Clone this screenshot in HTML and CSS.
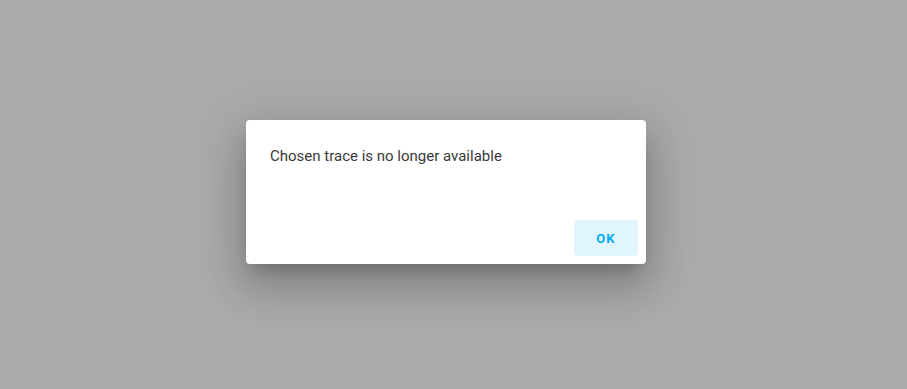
FILE: index.html
```html
<!DOCTYPE html>
<html lang="en">
<head>
    <meta charset="UTF-8">
    <title>Trace unavailable</title>
    <link rel="stylesheet" href="styles.css">
</head>
<body>
    <div class="backdrop">
        <div class="dialog" role="dialog">
            <div class="dialog-content">
                <p class="dialog-text">Chosen trace is no longer available</p>
            </div>
            <div class="dialog-actions">
                <button class="btn-ok">OK</button>
            </div>
        </div>
    </div>
</body>
</html>
```

FILE: styles.css
```css
* {
    margin: 0;
    padding: 0;
    box-sizing: border-box;
}

body {
    font-family: Roboto, "Liberation Sans", sans-serif;
    background: #aaaaaa;
    width: 907px;
    height: 389px;
    overflow: hidden;
}

.backdrop {
    display: flex;
    align-items: center;
    justify-content: center;
    height: 100%;
    padding: 0 15px 5px 0;
}

.dialog {
    width: 400px;
    background: #fff;
    border-radius: 4px;
    box-shadow: 0 11px 15px -7px rgba(0,0,0,0.2),
                0 24px 38px 3px rgba(0,0,0,0.14),
                0 9px 46px 8px rgba(0,0,0,0.12);
}

.dialog-content {
    padding: 26px 24px 0;
    height: 92px;
}

.dialog-text {
    font-size: 15px;
    line-height: 20px;
    color: #3a3a3a;
}

.dialog-actions {
    display: flex;
    justify-content: flex-end;
    padding: 8px;
}

.btn-ok {
    width: 64px;
    height: 36px;
    border: none;
    border-radius: 4px;
    background: #e1f5fe;
    color: #03a9f4;
    font-family: Roboto, "Liberation Sans", sans-serif;
    font-size: 13px;
    font-weight: 700;
    letter-spacing: 1.2px;
    cursor: pointer;
}
```
